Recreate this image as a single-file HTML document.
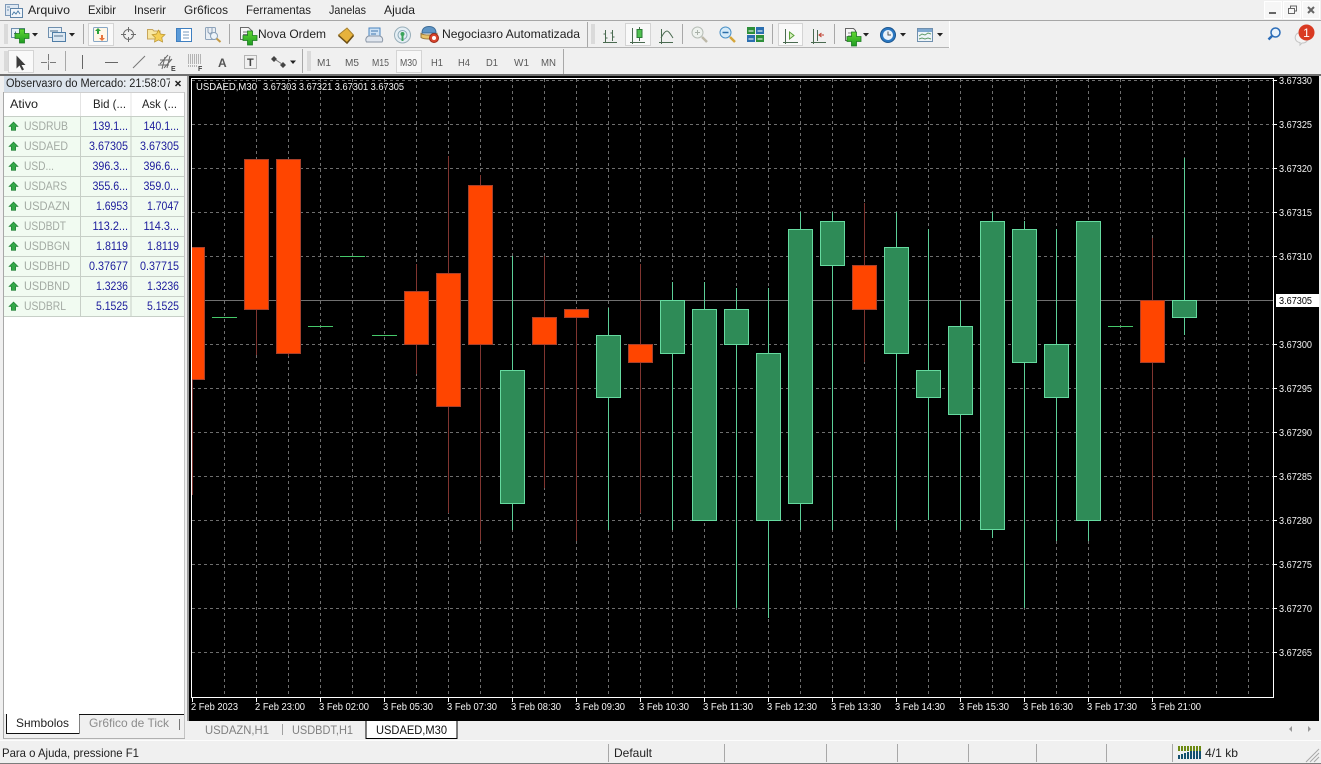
<!DOCTYPE html>
<html><head><meta charset="utf-8"><title>MT4</title>
<style>
html,body{margin:0;padding:0;background:#f0f0f0;overflow:hidden}
svg{display:block}
text{font-family:"Liberation Sans","DejaVu Sans",sans-serif;font-size:12px;fill:#222}
.c text,.c{font-size:10px;fill:#f4f4f4}
.tf text{font-size:10.5px;fill:#5a5a5a}
.n text{fill:#a3aaa3}
.p text{fill:#1c1c9c}
.g{fill:none;stroke:#6e6e6e;stroke-width:1;stroke-dasharray:3 3}
.br{fill:#ff4500;stroke:#a8402a}
.bu{fill:#2e8b57;stroke:#66dba0}
.bw{stroke:#803530;fill:none}
.uw{stroke:#5ccf98;fill:none}
.dj{stroke:#46c86a;fill:none}
.ic{fill:none;stroke:#6b6b6b;stroke-width:1}
.sep{stroke:#a8a8a8}
</style></head>
<body>
<svg width="1321" height="764" viewBox="0 0 1321 764" xmlns="http://www.w3.org/2000/svg">
<defs>
<linearGradient id="hd" x1="0" x2="1" y1="0" y2="0"><stop offset="0" stop-color="#d3dde8"/><stop offset="1" stop-color="#edf0f3"/></linearGradient>
<linearGradient id="gp" x1="0" x2="0" y1="0" y2="1"><stop offset="0" stop-color="#62d832"/><stop offset="1" stop-color="#1f9c24"/></linearGradient>
<g id="plus"><path d="M-2.500-7h5v4.500h4.500v5h-4.500v4.500h-5v-4.500h-4.500v-5h4.500z" fill="url(#gp)" stroke="#1c7a22" stroke-width=".8"/></g>
<g id="drop"><path d="M-3 0h6l-3 3.500z" fill="#222"/></g>
<g id="upar"><path d="M0-4.500l4.500 4.500h-2.300v3.800h-4.400v-3.800h-2.300z" fill="#34a848" stroke="#1a7a30" stroke-width=".6"/></g>
</defs>

<rect width="1321" height="764" fill="#f0f0f0"/>

<!-- top lines -->
<rect x="0" y="20" width="1321" height="1" fill="#a6a6a6"/>
<rect x="0" y="47" width="950" height="1" fill="#b4b4b4"/>
<rect x="949" y="21" width="1" height="27" fill="#fff"/>
<rect x="0" y="74" width="1321" height="2" fill="#707070"/>

<!-- app icon -->
<g transform="translate(4,1)">
<rect x="1.500" y="3.500" width="13" height="11" fill="#dfe8f2" stroke="#7d99b8"/>
<rect x="6.500" y="7.500" width="12" height="9" fill="#f2f6fa" stroke="#5f84a8"/>
<path d="M8 14l2-3 2 2 2-3 2 3" fill="none" stroke="#4c7ea8"/>
<path d="M3 6h3M3 9h2" stroke="#6d8fb3"/>
</g>

<!-- menu -->
<text x="28" y="14" textLength="42" lengthAdjust="spacingAndGlyphs">Arquivo</text>
<text x="88" y="14" textLength="28" lengthAdjust="spacingAndGlyphs">Exibir</text>
<text x="134" y="14" textLength="32" lengthAdjust="spacingAndGlyphs">Inserir</text>
<text x="184" y="14" textLength="44" lengthAdjust="spacingAndGlyphs">Gr6ficos</text>
<text x="246" y="14" textLength="65" lengthAdjust="spacingAndGlyphs">Ferramentas</text>
<text x="329" y="14" textLength="37" lengthAdjust="spacingAndGlyphs">Janelas</text>
<text x="384" y="14" textLength="31" lengthAdjust="spacingAndGlyphs">Ajuda</text>

<!-- window buttons -->
<rect x="1264.500" y="1.500" width="17" height="17" fill="#f6f6f6" stroke="#fff"/>
<rect x="1283.500" y="1.500" width="17" height="17" fill="#f6f6f6" stroke="#fff"/>
<rect x="1302.500" y="1.500" width="17" height="17" fill="#f6f6f6" stroke="#fff"/>
<rect x="1269" y="12" width="7" height="2" fill="#666"/>
<path d="M1288.500 8.500h6v5h-6zM1290.500 8.500v-2.500h6v5h-2" fill="none" stroke="#666"/>
<path d="M1308 7l6 6M1314 7l-6 6" stroke="#666" stroke-width="2"/>

<!-- grips -->
<path d="M4 25h4M4 27h4M4 29h4M4 31h4M4 33h4M4 35h4M4 37h4M4 39h4M4 41h4M4 43h4" stroke="#c4c4c4"/>
<path d="M4 52h4M4 54h4M4 56h4M4 58h4M4 60h4M4 62h4M4 64h4M4 66h4M4 68h4M4 70h4" stroke="#c4c4c4"/>
<path d="M307 52h4M307 54h4M307 56h4M307 58h4M307 60h4M307 62h4M307 64h4M307 66h4M307 68h4M307 70h4" stroke="#c4c4c4"/>
<path d="M591 25h4M591 27h4M591 29h4M591 31h4M591 33h4M591 35h4M591 37h4M591 39h4M591 41h4M591 43h4" stroke="#c4c4c4"/>

<!-- separators toolbar 1 -->
<path class="sep" d="M83.500 24v20M229.500 24v20M587.500 22v25M682.500 24v20M772.500 24v20M834.500 24v20"/>
<!-- separators toolbar 2 -->
<path class="sep" d="M65.500 51v20M302.500 49v24M563.500 49v25"/>

<!-- active buttons -->
<rect x="88.500" y="23.500" width="25" height="22" fill="#f9f9f9" stroke="#d4d4d4"/>
<rect x="625.500" y="23.500" width="25" height="22" fill="#f9f9f9" stroke="#d4d4d4"/>
<rect x="778.500" y="23.500" width="24" height="22" fill="#f9f9f9" stroke="#d4d4d4"/>
<rect x="8.500" y="50.500" width="25" height="22" fill="#f9f9f9" stroke="#d4d4d4"/>
<rect x="396.500" y="50.500" width="25" height="22" fill="#f7f7f7" stroke="#d4d4d4"/>

<!-- New chart -->
<rect x="11.500" y="28.500" width="13" height="9" fill="#e8f0f7" stroke="#6f8fae"/>
<path d="M14 33.500h3M15.500 31.500v4M19 33h3" stroke="#50708e"/>
<use href="#plus" x="22" y="36"/>
<use href="#drop" x="35" y="33"/>
<!-- profiles -->
<rect x="48.500" y="27.500" width="13" height="10" fill="#e8f0f7" stroke="#6f8fae"/>
<rect x="52.500" y="32.500" width="13" height="9" fill="#dbe7f2" stroke="#4f7da6"/>
<path d="M50 31h8M54 36h9" stroke="#50708e"/>
<use href="#drop" x="72" y="33"/>
<!-- auto scroll-ish -->
<rect x="93.500" y="27.500" width="14" height="14" rx="1" fill="#fff7e8" stroke="#86a6c6"/>
<path d="M98 28l3 3h-2v3h-2v-3h-2z" fill="#2ca33c"/>
<path d="M102 41l-3-3h2v-3h2v3h2z" fill="#e8743a"/>
<!-- crosshair -->
<circle cx="128.500" cy="34.500" r="5" class="ic"/>
<path class="ic" d="M128.500 27v5M128.500 37v5M121 34.500h5M131 34.500h5"/>
<!-- folder star -->
<path d="M147.500 29.500h5l1.500 1.500h6v8h-12.500z" fill="#f8e6a0" stroke="#c7a55a"/>
<path d="M158.500 30l2 4 4.500.6-3.200 3 .8 4.400-4.100-2.100-4 2.100.8-4.400-3.200-3 4.400-.6z" fill="#f5cf55" stroke="#b8922c" stroke-width=".7"/>
<!-- panel -->
<rect x="176.500" y="28.500" width="15" height="13" fill="#fff" stroke="#3f7fc0"/>
<rect x="177" y="29" width="4" height="12" fill="#5a9ad8"/>
<path d="M183 32h6M183 35h6M183 38h6" stroke="#7a9bbd"/>
<!-- search tester -->
<rect x="205.500" y="27.500" width="10" height="12" rx="1" fill="#e9eef4" stroke="#8ea3ba"/>
<path d="M208 28v4l2 2 2-2v-4" fill="none" stroke="#8da0b6"/>
<circle cx="214" cy="36" r="3.500" fill="#eef4fa" stroke="#8aa0b8"/>
<path d="M216.500 38.500l4 3.500" stroke="#c49a45" stroke-width="2"/>
<!-- order -->
<path d="M240.500 27.500h8l3 3v9h-11z" fill="#f6f6f6" stroke="#6a6a6a"/>
<path d="M243 32h6M243 34.500h6M243 37h4" stroke="#777"/>
<use href="#plus" x="250" y="38"/>
<text x="258" y="38" textLength="68" lengthAdjust="spacingAndGlyphs" font-size="12">Nova Ordem</text>
<!-- gold -->
<path d="M338.500 35l8.500-7 6.500 7-6.500 8z" fill="#e6b23c" stroke="#a88230"/>
<path d="M338.500 35.500l8.500 7.500 6.500-7.500" fill="none" stroke="#6d4f16" stroke-width="1.500"/>
<!-- people -->
<path d="M369 28h11v9h-11z" fill="#cfe2f5" stroke="#4a85c0"/>
<path d="M371 31h7M371 34h5" stroke="#3f76ad"/>
<path d="M366.500 42a4 4 0 0 1 2-6h11.500a4 4 0 0 1 2 6z" fill="#e0e6ee" stroke="#8a96a6"/>
<!-- signal -->
<circle cx="402.500" cy="35" r="8" fill="#e4eef4" stroke="#98aeb9"/>
<circle cx="402.500" cy="35" r="4.500" fill="none" stroke="#88a7b6"/>
<circle cx="402.500" cy="34" r="2" fill="#3aa35a"/>
<path d="M402.500 35v6" stroke="#3aa35a" stroke-width="2"/>
<!-- hat -->
<path d="M422 33c0-5 3.500-6.500 7-6.500s7 1.500 7 6.500z" fill="#5f95c5" stroke="#3b6a96"/>
<path d="M421 33.500c3 2 13 2 16 0v4c-3 2-13 2-16 0z" fill="#e8c36a" stroke="#96763a"/>
<circle cx="434" cy="38" r="4.500" fill="#d8452d" stroke="#9c2a18"/>
<circle cx="434" cy="38" r="2" fill="#fff"/>
<text x="442" y="38" textLength="138" lengthAdjust="spacingAndGlyphs">Negociaзro Automatizada</text>

<!-- bar chart icon -->
<path d="M605.500 30v13M612.500 30v11M603 42.500h14M603.500 34h2M605.500 38h2M610.500 33h2M612.500 37h2" stroke="#4a6a50" fill="none"/>
<!-- candle icon -->
<path d="M632.500 28v16M630 42.500h15M639.500 27v14" stroke="#4a6a50" fill="none"/>
<rect x="637" y="29.500" width="5" height="8" fill="#4fc04f" stroke="#2b7a35"/>
<!-- line icon -->
<path d="M661.500 29v15M659 42.500h14M661 38c2-4 4-7 6-7s4 4 6 7" stroke="#4a6a50" fill="none"/>
<!-- zoom in/out -->
<circle cx="697.500" cy="32.500" r="5.500" fill="#eef2ee" stroke="#b6bdb6"/>
<path d="M695 32.500h5M697.500 30v5" stroke="#aab2aa"/>
<path d="M702 37l5 5" stroke="#bcb8a8" stroke-width="2.500"/>
<circle cx="725.500" cy="32.500" r="5.500" fill="#d4eaf8" stroke="#4a90c6"/>
<path d="M722.500 32.500h6" stroke="#2b6ea8" stroke-width="1.500"/>
<path d="M730 37l5 5" stroke="#d5a63a" stroke-width="2.500"/>
<!-- tile -->
<rect x="747" y="27" width="8" height="7" fill="#2e8f3a"/><rect x="756" y="27" width="8" height="7" fill="#2b6fb0"/>
<rect x="747" y="35" width="8" height="7" fill="#2b6fb0"/><rect x="756" y="35" width="8" height="7" fill="#2e8f3a"/>
<path d="M748.500 31h5M757.500 31h5M748.500 39h5M757.500 39h5" stroke="#fff"/>
<!-- scroll icons -->
<path d="M785.500 29v15M783 42.500h15" stroke="#4a6a50" fill="none"/>
<path d="M789.500 32l4.500 3.500-4.500 3.500z" fill="#d8f0c0" stroke="#58a038"/>
<path d="M813.500 29v15M817.500 30v11M811 42.500h15" stroke="#4a6a50" fill="none"/>
<path d="M824 35h-4M821.500 33l-2.500 2 2.500 2" stroke="#c04030" fill="none"/>
<!-- add indicator -->
<path d="M845.500 28.500h8l2 2v10h-10z" fill="#f6f6f6" stroke="#666"/>
<path d="M848 33h5M848 36h5" stroke="#888"/>
<use href="#plus" x="854" y="39"/>
<use href="#drop" x="866" y="33"/>
<!-- clock -->
<circle cx="888" cy="35" r="7.500" fill="#2b78c2" stroke="#1c568f"/>
<circle cx="888" cy="35" r="5" fill="#eaf3fb"/>
<path d="M888 31.500v3.500h3" stroke="#555" fill="none"/>
<use href="#drop" x="903" y="33"/>
<!-- templates -->
<rect x="917.500" y="28.500" width="15" height="13" fill="#eef4f9" stroke="#6f8fae"/>
<rect x="918" y="29" width="14" height="3" fill="#7ea8d0"/>
<path d="M919 36l3-2 3 1 3-2 3 1M919 39l3-1 3 1 3-1 3 1" stroke="#5f9a6a" fill="none"/>
<use href="#drop" x="940" y="33"/>

<!-- search / bubble -->
<circle cx="1275.500" cy="32.500" r="4.500" fill="#e8f2fb" stroke="#2a6cb8" stroke-width="1.500"/>
<path d="M1272 36l-3.500 3.500" stroke="#2a6cb8" stroke-width="2.500"/>
<path d="M1298 33h5a5 5 0 0 1 0 10h-1l-2 2v-2.500a5 5 0 0 1-2-9.500z" fill="#f4f4f4" stroke="#c4c4c4"/>
<circle cx="1306.500" cy="32.500" r="8" fill="#d93a22"/>
<text x="1306.500" y="37" text-anchor="middle" style="fill:#fff;font-size:12px">1</text>

<!-- toolbar 2 icons -->
<path d="M16.500 55.500v13l3-3 2.500 5 2-1-2.500-4.500h4z" fill="#3c3c3c"/>
<path d="M48.500 54v6M48.500 64v6M41 62.500h6M50 62.500h6" stroke="#7a7a7a"/>
<path d="M48.500 60.500v4" stroke="#999"/>
<path d="M82.500 55v14" stroke="#666"/>
<path d="M105 62.500h13" stroke="#666"/>
<path d="M133 68l12-12" stroke="#777"/>
<path d="M160 64l8-9M164 68l8-9M160 60h11M158 65h11M162 69l3-12M167 68l3-12" stroke="#6a6a6a" fill="none"/>
<text x="171" y="71" style="font-size:7px;fill:#444;font-weight:bold">E</text>
<path d="M188 55h13M188 57h13M188 59h13M188 61h13M188 63h13M188 66h10" stroke="#777" stroke-dasharray="1 1"/>
<text x="198" y="71" style="font-size:7px;fill:#444;font-weight:bold">F</text>
<text x="218" y="67" style="font-size:12px;fill:#555;font-weight:bold">A</text>
<rect x="244.500" y="55.500" width="12" height="13" fill="none" stroke="#777" stroke-dasharray="1 1"/>
<text x="247" y="66" style="font-size:11px;fill:#444;font-weight:bold">T</text>
<path d="M274 56l3 3-3 3-3-3zM283 62l3 3-3 3-3-3z" fill="#444"/>
<path d="M276 60l6 4" stroke="#777"/>
<use href="#drop" x="293" y="60.500"/>

<!-- timeframes -->
<g class="tf">
<text x="317" y="66" textLength="14" lengthAdjust="spacingAndGlyphs">M1</text>
<text x="345" y="66" textLength="14" lengthAdjust="spacingAndGlyphs">M5</text>
<text x="372" y="66" textLength="17" lengthAdjust="spacingAndGlyphs">M15</text>
<text x="400" y="66" textLength="17" lengthAdjust="spacingAndGlyphs">M30</text>
<text x="431" y="66" textLength="12" lengthAdjust="spacingAndGlyphs">H1</text>
<text x="458" y="66" textLength="12" lengthAdjust="spacingAndGlyphs">H4</text>
<text x="486" y="66" textLength="12" lengthAdjust="spacingAndGlyphs">D1</text>
<text x="514" y="66" textLength="15" lengthAdjust="spacingAndGlyphs">W1</text>
<text x="541" y="66" textLength="15" lengthAdjust="spacingAndGlyphs">MN</text>
</g>

<!-- market watch panel -->
<rect x="3" y="92" width="181" height="622" fill="#fff"/>
<rect x="4" y="76" width="167" height="16" fill="url(#hd)"/>
<text x="6" y="87" textLength="166" lengthAdjust="spacingAndGlyphs" style="font-size:11.500px">Observaзro do Mercado: 21:58:07</text>
<rect x="170" y="76" width="17" height="16" fill="#f0f0f0"/>
<path d="M175.500 81l5 5M180.500 81l-5 5" stroke="#222" stroke-width="1.500"/>
<rect x="3" y="92" width="1" height="646" fill="#a8a8a8"/>
<rect x="184" y="92" width="1" height="646" fill="#c4c4c4"/>
<rect x="4" y="92" width="180" height="1" fill="#cfcfcf"/>

<rect x="4" y="116" width="180" height="200" fill="#f1fbf1"/>
<path d="M4 116.500h180M4 136.500h180M4 156.500h180M4 176.500h180M4 196.500h180M4 216.500h180M4 236.500h180M4 256.500h180M4 276.500h180M4 296.500h180M4 316.500h180" stroke="#c7cfc7"/>
<path d="M80.500 93v223M131 93v223" stroke="#c7cfc7"/>
<path d="M80.500 93v23M131 93v23" stroke="#e4e4e4"/>

<text x="10" y="108" textLength="28" lengthAdjust="spacingAndGlyphs">Ativo</text>
<text x="93" y="108" textLength="33" lengthAdjust="spacingAndGlyphs">Bid (...</text>
<text x="142" y="108" textLength="35" lengthAdjust="spacingAndGlyphs">Ask (...</text>

<use href="#upar" x="13.500" y="126.500"/><use href="#upar" x="13.500" y="146.500"/><use href="#upar" x="13.500" y="166.500"/><use href="#upar" x="13.500" y="186.500"/><use href="#upar" x="13.500" y="206.500"/>
<use href="#upar" x="13.500" y="226.500"/><use href="#upar" x="13.500" y="246.500"/><use href="#upar" x="13.500" y="266.500"/><use href="#upar" x="13.500" y="286.500"/><use href="#upar" x="13.500" y="306.500"/>

<g class="n">
<text x="24" y="130" textLength="44" lengthAdjust="spacingAndGlyphs">USDRUB</text>
<text x="24" y="150" textLength="44" lengthAdjust="spacingAndGlyphs">USDAED</text>
<text x="24" y="170" textLength="30" lengthAdjust="spacingAndGlyphs">USD...</text>
<text x="24" y="190" textLength="43" lengthAdjust="spacingAndGlyphs">USDARS</text>
<text x="24" y="210" textLength="46" lengthAdjust="spacingAndGlyphs">USDAZN</text>
<text x="24" y="230" textLength="42" lengthAdjust="spacingAndGlyphs">USDBDT</text>
<text x="24" y="250" textLength="46" lengthAdjust="spacingAndGlyphs">USDBGN</text>
<text x="24" y="270" textLength="46" lengthAdjust="spacingAndGlyphs">USDBHD</text>
<text x="24" y="290" textLength="46" lengthAdjust="spacingAndGlyphs">USDBND</text>
<text x="24" y="310" textLength="42" lengthAdjust="spacingAndGlyphs">USDBRL</text>
</g>
<g class="p">
<text x="92.500" y="130" textLength="35.500" lengthAdjust="spacingAndGlyphs">139.1...</text>
<text x="89" y="150" textLength="39" lengthAdjust="spacingAndGlyphs">3.67305</text>
<text x="92.500" y="170" textLength="35.500" lengthAdjust="spacingAndGlyphs">396.3...</text>
<text x="92.500" y="190" textLength="35.500" lengthAdjust="spacingAndGlyphs">355.6...</text>
<text x="96" y="210" textLength="32" lengthAdjust="spacingAndGlyphs">1.6953</text>
<text x="92.500" y="230" textLength="35.500" lengthAdjust="spacingAndGlyphs">113.2...</text>
<text x="96" y="250" textLength="32" lengthAdjust="spacingAndGlyphs">1.8119</text>
<text x="89" y="270" textLength="39" lengthAdjust="spacingAndGlyphs">0.37677</text>
<text x="96" y="290" textLength="32" lengthAdjust="spacingAndGlyphs">1.3236</text>
<text x="96" y="310" textLength="32" lengthAdjust="spacingAndGlyphs">5.1525</text>
<text x="143.500" y="130" textLength="35.500" lengthAdjust="spacingAndGlyphs">140.1...</text>
<text x="140" y="150" textLength="39" lengthAdjust="spacingAndGlyphs">3.67305</text>
<text x="143.500" y="170" textLength="35.500" lengthAdjust="spacingAndGlyphs">396.6...</text>
<text x="143.500" y="190" textLength="35.500" lengthAdjust="spacingAndGlyphs">359.0...</text>
<text x="147" y="210" textLength="32" lengthAdjust="spacingAndGlyphs">1.7047</text>
<text x="143.500" y="230" textLength="35.500" lengthAdjust="spacingAndGlyphs">114.3...</text>
<text x="147" y="250" textLength="32" lengthAdjust="spacingAndGlyphs">1.8119</text>
<text x="140" y="270" textLength="39" lengthAdjust="spacingAndGlyphs">0.37715</text>
<text x="147" y="290" textLength="32" lengthAdjust="spacingAndGlyphs">1.3236</text>
<text x="147" y="310" textLength="32" lengthAdjust="spacingAndGlyphs">5.1525</text>
</g>

<!-- panel tabs -->
<rect x="4" y="714" width="180" height="24" fill="#f0f0f0"/>
<path d="M79 714.500h105" stroke="#111"/>
<path d="M6.500 714v19.500h72.500v-19.500" fill="#fff" stroke="#111"/>
<rect x="7" y="712" width="72" height="21" fill="#fff"/>
<rect x="3" y="738" width="182" height="1" fill="#b0b0b0"/>
<text x="16" y="727" textLength="53" lengthAdjust="spacingAndGlyphs">Sнmbolos</text>
<text x="89" y="727" textLength="80" lengthAdjust="spacingAndGlyphs" style="fill:#8c8c8c">Gr6fico de Tick</text>
<path d="M179.500 719v11" stroke="#777"/>

<!-- chart -->
<rect x="187" y="76" width="2" height="645" fill="#9a9a9a"/>
<rect x="189" y="76" width="1130" height="644" fill="#000"/>

<path class="g" d="M192 80.500H1273M192 124.500H1273M192 168.500H1273M192 212.500H1273M192 256.500H1273M192 344.500H1273M192 388.500H1273M192 432.500H1273M192 476.500H1273M192 520.500H1273M192 564.500H1273M192 608.500H1273M192 652.500H1273"/>
<path class="g" d="M224.500 79V697M256.500 79V697M288.500 79V697M320.500 79V697M352.500 79V697M384.500 79V697M416.500 79V697M448.500 79V697M480.500 79V697M512.500 79V697M544.500 79V697M576.500 79V697M608.500 79V697M640.500 79V697M672.500 79V697M704.500 79V697M736.500 79V697M768.500 79V697M800.500 79V697M832.500 79V697M864.500 79V697M896.500 79V697M928.500 79V697M960.500 79V697M992.500 79V697M1024.500 79V697M1056.500 79V697M1088.500 79V697M1120.500 79V697M1152.500 79V697M1184.500 79V697M1216.500 79V697M1248.500 79V697"/>
<path d="M192 300.500H1273" stroke="#707070"/>

<!-- wicks -->
<path class="bw" d="M192.500 380V495M256.500 309V355M288.500 353V356M416.500 264V374M448.500 156V513M480.500 175V541M544.500 256V488M576.500 308V541M640.500 264V513M864.500 203V362M1152.500 238V520"/>
<path class="uw" d="M512.500 256V530M608.500 308V530M672.500 282V530M704.500 282V309M736.500 288V608M768.500 288V618M800.500 212V530M832.500 212V530M896.500 212V530M928.500 229V520M960.500 300V530M992.500 212V538M1024.500 221V608M1056.500 229V541M1088.500 221V541M1184.500 158V335"/>
<path class="dj" d="M212 317.500H237M308 326.500H333M340 256.500H365M372 335.500H397M1108 326.500H1133"/>

<!-- bodies -->
<g class="br">
<rect x="191.500" y="247.500" width="13" height="132"/>
<rect x="244.500" y="159.500" width="24" height="150"/>
<rect x="276.500" y="159.500" width="24" height="194"/>
<rect x="404.500" y="291.500" width="24" height="53"/>
<rect x="436.500" y="273.500" width="24" height="133"/>
<rect x="468.500" y="185.500" width="24" height="159"/>
<rect x="532.500" y="317.500" width="24" height="27"/>
<rect x="564.500" y="309.500" width="24" height="8"/>
<rect x="628.500" y="344.500" width="24" height="18"/>
<rect x="852.500" y="265.500" width="24" height="44"/>
<rect x="1140.500" y="300.500" width="24" height="62"/>
</g>
<g class="bu">
<rect x="500.500" y="370.500" width="24" height="133"/>
<rect x="596.500" y="335.500" width="24" height="62"/>
<rect x="660.500" y="300.500" width="24" height="53"/>
<rect x="692.500" y="309.500" width="24" height="211"/>
<rect x="724.500" y="309.500" width="24" height="35"/>
<rect x="756.500" y="353.500" width="24" height="167"/>
<rect x="788.500" y="229.500" width="24" height="274"/>
<rect x="820.500" y="221.500" width="24" height="44"/>
<rect x="884.500" y="247.500" width="24" height="106"/>
<rect x="916.500" y="370.500" width="24" height="27"/>
<rect x="948.500" y="326.500" width="24" height="88"/>
<rect x="980.500" y="221.500" width="24" height="308"/>
<rect x="1012.500" y="229.500" width="24" height="133"/>
<rect x="1044.500" y="344.500" width="24" height="53"/>
<rect x="1076.500" y="221.500" width="24" height="299"/>
<rect x="1172.500" y="300.500" width="24" height="17"/>
</g>

<!-- frame -->
<rect x="191.500" y="78.500" width="1082" height="619" fill="none" stroke="#fff"/>
<path d="M1273 80.500h4M1273 124.500h4M1273 168.500h4M1273 212.500h4M1273 256.500h4M1273 344.500h4M1273 388.500h4M1273 432.500h4M1273 476.500h4M1273 520.500h4M1273 564.500h4M1273 608.500h4M1273 652.500h4" stroke="#fff"/>
<path d="M192.500 697v5M256.500 697v5M320.500 697v5M384.500 697v5M448.500 697v5M512.500 697v5M576.500 697v5M640.500 697v5M704.500 697v5M768.500 697v5M832.500 697v5M896.500 697v5M960.500 697v5M1024.500 697v5M1088.500 697v5M1152.500 697v5" stroke="#fff"/>

<g class="c">
<text x="196" y="90" textLength="61" lengthAdjust="spacingAndGlyphs">USDAED,M30</text>
<text x="263" y="90" textLength="141" lengthAdjust="spacingAndGlyphs">3.67303 3.67321 3.67301 3.67305</text>
<text x="1279" y="84" textLength="33" lengthAdjust="spacingAndGlyphs">3.67330</text>
<text x="1279" y="128" textLength="33" lengthAdjust="spacingAndGlyphs">3.67325</text>
<text x="1279" y="172" textLength="33" lengthAdjust="spacingAndGlyphs">3.67320</text>
<text x="1279" y="216" textLength="33" lengthAdjust="spacingAndGlyphs">3.67315</text>
<text x="1279" y="260" textLength="33" lengthAdjust="spacingAndGlyphs">3.67310</text>
<text x="1279" y="348" textLength="33" lengthAdjust="spacingAndGlyphs">3.67300</text>
<text x="1279" y="392" textLength="33" lengthAdjust="spacingAndGlyphs">3.67295</text>
<text x="1279" y="436" textLength="33" lengthAdjust="spacingAndGlyphs">3.67290</text>
<text x="1279" y="480" textLength="33" lengthAdjust="spacingAndGlyphs">3.67285</text>
<text x="1279" y="524" textLength="33" lengthAdjust="spacingAndGlyphs">3.67280</text>
<text x="1279" y="568" textLength="33" lengthAdjust="spacingAndGlyphs">3.67275</text>
<text x="1279" y="612" textLength="33" lengthAdjust="spacingAndGlyphs">3.67270</text>
<text x="1279" y="656" textLength="33" lengthAdjust="spacingAndGlyphs">3.67265</text>
<text x="191" y="710" textLength="47" lengthAdjust="spacingAndGlyphs">2 Feb 2023</text>
<text x="255" y="710" textLength="50" lengthAdjust="spacingAndGlyphs">2 Feb 23:00</text>
<text x="319" y="710" textLength="50" lengthAdjust="spacingAndGlyphs">3 Feb 02:00</text>
<text x="383" y="710" textLength="50" lengthAdjust="spacingAndGlyphs">3 Feb 05:30</text>
<text x="447" y="710" textLength="50" lengthAdjust="spacingAndGlyphs">3 Feb 07:30</text>
<text x="511" y="710" textLength="50" lengthAdjust="spacingAndGlyphs">3 Feb 08:30</text>
<text x="575" y="710" textLength="50" lengthAdjust="spacingAndGlyphs">3 Feb 09:30</text>
<text x="639" y="710" textLength="50" lengthAdjust="spacingAndGlyphs">3 Feb 10:30</text>
<text x="703" y="710" textLength="50" lengthAdjust="spacingAndGlyphs">3 Feb 11:30</text>
<text x="767" y="710" textLength="50" lengthAdjust="spacingAndGlyphs">3 Feb 12:30</text>
<text x="831" y="710" textLength="50" lengthAdjust="spacingAndGlyphs">3 Feb 13:30</text>
<text x="895" y="710" textLength="50" lengthAdjust="spacingAndGlyphs">3 Feb 14:30</text>
<text x="959" y="710" textLength="50" lengthAdjust="spacingAndGlyphs">3 Feb 15:30</text>
<text x="1023" y="710" textLength="50" lengthAdjust="spacingAndGlyphs">3 Feb 16:30</text>
<text x="1087" y="710" textLength="50" lengthAdjust="spacingAndGlyphs">3 Feb 17:30</text>
<text x="1151" y="710" textLength="50" lengthAdjust="spacingAndGlyphs">3 Feb 21:00</text>
</g>
<rect x="1276" y="294" width="43" height="13" fill="#fff"/>
<text x="1279" y="304" textLength="33" lengthAdjust="spacingAndGlyphs" style="font-size:10px;fill:#000">3.67305</text>

<!-- chart tabs -->
<rect x="189" y="720" width="1130" height="1" fill="#000"/>
<text x="205" y="734" textLength="64" lengthAdjust="spacingAndGlyphs" style="fill:#808080">USDAZN,H1</text>
<path d="M282.500 724v11" stroke="#a0a0a0"/>
<text x="292" y="734" textLength="61" lengthAdjust="spacingAndGlyphs" style="fill:#808080">USDBDT,H1</text>
<path d="M366 721H456.500V738.500H366z" fill="#fff" stroke="none"/>
<path d="M366 720.500V738.500H457V720.500" fill="none" stroke="#000"/>
<text x="376" y="734" textLength="71" lengthAdjust="spacingAndGlyphs" style="fill:#111">USDAED,M30</text>
<path d="M1292 726v6l-3-3z" fill="#999"/>
<path d="M1308 726v6l3-3z" fill="#999"/>

<!-- status bar -->
<rect x="0" y="740" width="1321" height="1" fill="#fcfcfc"/>
<rect x="0" y="763" width="1321" height="1" fill="#7c7c7c"/>
<text x="2" y="757" textLength="137" lengthAdjust="spacingAndGlyphs">Para o Ajuda, pressione F1</text>
<text x="614" y="757" textLength="38" lengthAdjust="spacingAndGlyphs">Default</text>
<text x="1205" y="757" textLength="33" lengthAdjust="spacingAndGlyphs">4/1 kb</text>
<path d="M608.500 744v18M724.500 744v18M826.500 744v18M897.500 744v18M968.500 744v18M1036.500 744v18M1106.500 744v18M1172.500 744v18" stroke="#a8a8a8"/>
<g stroke-width="2">
<path d="M1179 746v5M1182 746v5M1185 746v5M1188 746v5M1191 746v5M1194 746v5M1197 746v5M1200 746v5" stroke="#6d8a12"/>
<path d="M1179 755v4M1182 754v5M1185 753v6M1188 752v7M1191 751v8M1194 751v8M1197 751v8M1200 751v8" stroke="#14506e"/>
</g>
<path d="M1306 762L1319 749M1310 762L1319 753M1314 762L1319 757" stroke="#a8a8a8"/>
</svg>
</body></html>
